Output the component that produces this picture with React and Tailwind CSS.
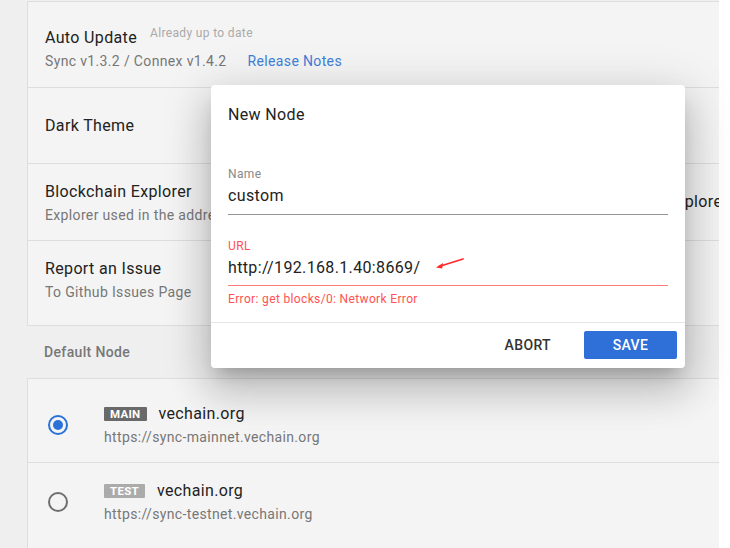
import React from 'react';

const font = { fontFamily: 'Roboto, "Liberation Sans", sans-serif' };

const SettingRow = ({ className = '', children }) => (
    <div className={`border-b border-[#dedede] px-[17px] ${className}`}>{children}</div>
);

const NodeRow = ({ selected, tag, tagClass, name, url, className = '' }) => (
    <div className={`flex border-b border-[#dedede] ${className}`}>
        <div className="w-[76px] pl-[20px] pt-[13px]">
            {selected ? (
                <div className="w-[20px] h-[20px] rounded-full border-2 border-[#2a72d8] flex items-center justify-center">
                    <div className="w-[10px] h-[10px] rounded-full bg-[#2a72d8]"></div>
                </div>
            ) : (
                <div className="w-[20px] h-[20px] rounded-full border-2 border-[#6f6f6f]"></div>
            )}
        </div>
        <div>
            <div className="flex items-center h-[24px]">
                <span className={`text-[11.5px] leading-[14px] font-bold text-white px-[6px] rounded-[1px] tracking-wide ${tagClass}`}>{tag}</span>
                <span className="ml-[12px] text-[16px] text-[#222]">{name}</span>
            </div>
            <div className="mt-[1px] text-[14px] leading-[20px] text-[#777]">{url}</div>
        </div>
    </div>
);

export default function App() {
    return (
        <div className="relative w-[730px] h-[548px] overflow-hidden bg-white tracking-[0.35px]" style={font}>
            {/* Settings page */}
            <div className="w-[719px] h-full bg-[#efefef] overflow-hidden pl-[27px] pt-[1px]">
                <div className="w-[719px] bg-[#f4f4f4] border border-[#dedede] border-b-0">
                    <SettingRow className="h-[86px] pt-[24px]">
                        <div className="flex items-start h-[24px]">
                            <span className="text-[16px] leading-[24px] text-[#222]">Auto Update</span>
                            <span className="ml-[13px] -mt-[1px] text-[12px] leading-[16px] text-[#aaa]">Already up to date</span>
                        </div>
                        <div className="mt-[1px] text-[14px] leading-[20px] text-[#777]">
                            Sync v1.3.2 / Connex v1.4.2
                            <span className="ml-[21px] text-[#3d7fd8]">Release Notes</span>
                        </div>
                    </SettingRow>
                    <SettingRow className="h-[76px] flex items-center">
                        <span className="text-[16px] text-[#222]">Dark Theme</span>
                    </SettingRow>
                    <SettingRow className="h-[77px] pt-[16px] flex justify-between">
                        <div>
                            <div className="text-[16px] leading-[24px] text-[#222]">Blockchain Explorer</div>
                            <div className="mt-[1px] text-[14px] leading-[20px] text-[#777]">Explorer used in the address and transaction links</div>
                        </div>
                        <div className="pt-[10px] text-[16px] leading-[24px] text-[#222]">VeChain Explorer</div>
                    </SettingRow>
                    <SettingRow className="h-[85px] pt-[16px]">
                        <div className="text-[16px] leading-[24px] text-[#222]">Report an Issue</div>
                        <div className="mt-[1px] text-[14px] leading-[20px] text-[#777]">To Github Issues Page</div>
                    </SettingRow>
                </div>

                <div className="h-[52px] pl-[17px] flex items-center text-[14px] font-medium text-[#777]">Default Node</div>

                <div className="w-[719px] bg-[#f4f4f4] border border-[#dedede] border-b-0">
                    <NodeRow
                        selected
                        tag="MAIN"
                        tagClass="bg-[#696969]"
                        name="vechain.org"
                        url="https://sync-mainnet.vechain.org"
                        className="h-[84px] pt-[23px]"
                    />
                    <NodeRow
                        tag="TEST"
                        tagClass="bg-[#ababab]"
                        name="vechain.org"
                        url="https://sync-testnet.vechain.org"
                        className="h-[90px] pt-[16px]"
                    />
                </div>
            </div>

            {/* New Node dialog */}
            <div className="absolute left-[211px] top-[85px] w-[474px] h-[283px] bg-white rounded-[4px] shadow-[0_11px_15px_-7px_rgba(0,0,0,0.2),0_24px_38px_3px_rgba(0,0,0,0.14),0_9px_46px_8px_rgba(0,0,0,0.12)] flex flex-col">
                <div className="px-[17px] pt-[19px] text-[16px] leading-[22px] text-[#222]">New Node</div>
                <div className="px-[17px] pt-[40px] flex-1">
                    <div className="text-[12px] leading-[16px] text-[#888]">Name</div>
                    <div className="text-[16px] leading-[24px] text-[#222] pt-[2px] pb-[6px] border-b border-[#949494]">custom</div>

                    <div className="mt-[23px] text-[12px] leading-[16px] text-[#ff5252]">URL</div>
                    <div className="relative text-[16px] leading-[24px] text-[#222] pt-[2px] pb-[5px] border-b border-[#ff7a7a]">
                        http://192.168.1.40:8669/
                        <svg className="absolute left-[206px] top-[3px]" width="32" height="14" viewBox="0 0 32 14">
                            <path d="M29 2 L5 9.5" stroke="#ff2a2a" strokeWidth="1.8" strokeLinecap="round" fill="none" />
                            <path d="M2 10.5 L9 6 L8.2 11.5 Z" fill="#ff2a2a" />
                        </svg>
                    </div>
                    <div className="mt-[5px] text-[12px] leading-[16px] text-[#ff5252]">Error: get blocks/0: Network Error</div>
                </div>
                <div className="border-t border-[#e6e6e6] h-[46px] flex items-center justify-end pr-[8px] pb-[1px]">
                    <button className="text-[14px] font-medium text-[#333] tracking-wide mr-[33px]">ABORT</button>
                    <button className="w-[93px] h-[28px] rounded-[2px] bg-[#2f6fd8] text-white text-[14px] font-medium tracking-wide">SAVE</button>
                </div>
            </div>
        </div>
    );
}
